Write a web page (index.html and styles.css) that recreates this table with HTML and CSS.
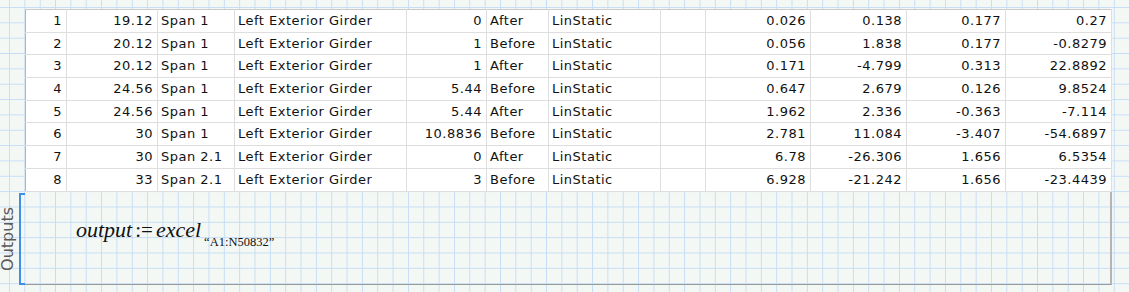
FILE: index.html
```html
<!DOCTYPE html>
<html>
<head>
<meta charset="utf-8">
<link rel="stylesheet" href="styles.css">
</head>
<body>
<div class="sheet">
  <div class="gutter">
    <div class="marker">
      <span class="label">Outputs</span>
      <span class="bracket"></span>
    </div>
  </div>
  <div class="box">
    <table class="data">
      <colgroup>
        <col class="w1"><col class="w2"><col class="w3"><col class="w4"><col class="w5"><col class="w6">
        <col class="w7"><col class="w8"><col class="w9"><col class="w10"><col class="w11"><col class="w12">
      </colgroup>
      <tbody>
        <tr><td class="r">1</td><td class="r">19.12</td><td>Span 1</td><td>Left Exterior Girder</td><td class="r">0</td><td>After</td><td>LinStatic</td><td></td><td class="r">0.026</td><td class="r">0.138</td><td class="r">0.177</td><td class="r">0.27</td></tr>
        <tr><td class="r">2</td><td class="r">20.12</td><td>Span 1</td><td>Left Exterior Girder</td><td class="r">1</td><td>Before</td><td>LinStatic</td><td></td><td class="r">0.056</td><td class="r">1.838</td><td class="r">0.177</td><td class="r">-0.8279</td></tr>
        <tr><td class="r">3</td><td class="r">20.12</td><td>Span 1</td><td>Left Exterior Girder</td><td class="r">1</td><td>After</td><td>LinStatic</td><td></td><td class="r">0.171</td><td class="r">-4.799</td><td class="r">0.313</td><td class="r">22.8892</td></tr>
        <tr><td class="r">4</td><td class="r">24.56</td><td>Span 1</td><td>Left Exterior Girder</td><td class="r">5.44</td><td>Before</td><td>LinStatic</td><td></td><td class="r">0.647</td><td class="r">2.679</td><td class="r">0.126</td><td class="r">9.8524</td></tr>
        <tr><td class="r">5</td><td class="r">24.56</td><td>Span 1</td><td>Left Exterior Girder</td><td class="r">5.44</td><td>After</td><td>LinStatic</td><td></td><td class="r">1.962</td><td class="r">2.336</td><td class="r">-0.363</td><td class="r">-7.114</td></tr>
        <tr><td class="r">6</td><td class="r">30</td><td>Span 1</td><td>Left Exterior Girder</td><td class="r">10.8836</td><td>Before</td><td>LinStatic</td><td></td><td class="r">2.781</td><td class="r">11.084</td><td class="r">-3.407</td><td class="r">-54.6897</td></tr>
        <tr><td class="r">7</td><td class="r">30</td><td>Span 2.1</td><td>Left Exterior Girder</td><td class="r">0</td><td>After</td><td>LinStatic</td><td></td><td class="r">6.78</td><td class="r">-26.306</td><td class="r">1.656</td><td class="r">6.5354</td></tr>
        <tr><td class="r">8</td><td class="r">33</td><td>Span 2.1</td><td>Left Exterior Girder</td><td class="r">3</td><td>Before</td><td>LinStatic</td><td></td><td class="r">6.928</td><td class="r">-21.242</td><td class="r">1.656</td><td class="r">-23.4439</td></tr>
      </tbody>
    </table>
    <div class="region">
      <div class="math"><span class="var">output</span><span class="def">:=</span><span class="var">excel</span><sub class="str">“A1:N50832”</sub></div>
    </div>
  </div>
</div>
</body>
</html>
```

FILE: styles.css
```css
html, body {
  margin: 0;
  padding: 0;
}
body {
  background-color: #f4f8f5;
  background-image:
    linear-gradient(to right, #c6ddf5 1px, transparent 1px),
    linear-gradient(to bottom, #c6ddf5 1px, transparent 1px);
  background-size: 15.35px 15.35px;
  background-position: 9px 7px;
  height: 292px;
  overflow: hidden;
  font-family: "DejaVu Sans", Verdana, sans-serif;
}
.sheet {
  display: flex;
  padding-top: 9px;
}
.gutter {
  width: 25px;
  display: flex;
  flex-direction: column;
  justify-content: flex-end;
}
.marker {
  height: 92px;
  display: flex;
  align-items: center;
  justify-content: space-between;
}
.label {
  writing-mode: vertical-rl;
  transform: rotate(180deg);
  font-size: 16px;
  line-height: 16px;
  color: #5a5a5a;
  margin-left: 0;
}
.bracket {
  align-self: stretch;
  width: 4px;
  border: 2px solid #3f8fe4;
  border-right: none;
}
.box {
  width: 1087px;
  border-right: 2px solid #b4b4b4;
  border-bottom: 1px solid #9a9a9a;
  box-sizing: border-box;
}
.data {
  border-collapse: collapse;
  table-layout: fixed;
  width: 1086px;
  background: #fff;
  font-size: 13px;
  letter-spacing: 0.5px;
  color: #111;
}
.data tr {
  height: 22.7px;
}
.data td {
  border: 1px solid #dedede;
  padding: 0 3px;
  white-space: nowrap;
  overflow: hidden;
  vertical-align: middle;
  line-height: 16px;
}
.data tr:first-child td {
  border-top-color: #c9c9c9;
}
.data td:first-child {
  border-left-color: #b5b5b5;
}
.data td.r {
  text-align: right;
  padding-right: 4px;
}
.w1 { width: 41px; }
.w2 { width: 91px; }
.w3 { width: 77px; }
.w4 { width: 172px; }
.w5 { width: 80px; }
.w6 { width: 62px; }
.w7 { width: 112px; }
.w8 { width: 45px; }
.w9 { width: 105px; }
.w10 { width: 96px; }
.w11 { width: 99px; }
.w12 { width: 106px; }
.region {
  height: 92px;
  box-sizing: border-box;
  padding: 25px 0 0 51px;
}
.math {
  font-family: "Liberation Serif", "Times New Roman", serif;
  color: #111;
  white-space: nowrap;
  line-height: 26px;
}
.var {
  font-style: italic;
  font-size: 22px;
}
.def {
  font-size: 21px;
  margin: 0 3px 0 3px;
}
.str {
  font-size: 12.5px;
  vertical-align: -9px;
  margin-left: 3px;
}
```
